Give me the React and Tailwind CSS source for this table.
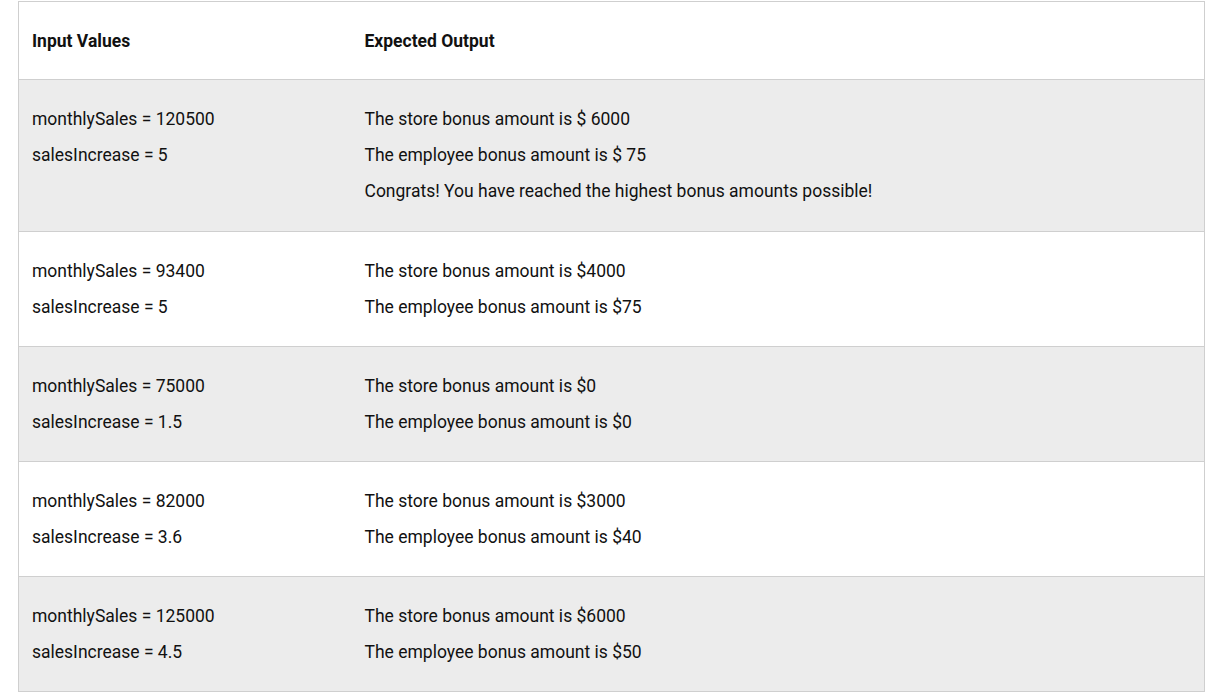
const rows = [
  {
    inputs: ['monthlySales = 120500', 'salesIncrease = 5'],
    outputs: [
      'The store bonus amount is $ 6000',
      'The employee bonus amount is $ 75',
      'Congrats! You have reached the highest bonus amounts possible!',
    ],
  },
  {
    inputs: ['monthlySales = 93400', 'salesIncrease = 5'],
    outputs: ['The store bonus amount is $4000', 'The employee bonus amount is $75'],
  },
  {
    inputs: ['monthlySales = 75000', 'salesIncrease = 1.5'],
    outputs: ['The store bonus amount is $0', 'The employee bonus amount is $0'],
  },
  {
    inputs: ['monthlySales = 82000', 'salesIncrease = 3.6'],
    outputs: ['The store bonus amount is $3000', 'The employee bonus amount is $40'],
  },
  {
    inputs: ['monthlySales = 125000', 'salesIncrease = 4.5'],
    outputs: ['The store bonus amount is $6000', 'The employee bonus amount is $50'],
  },
];

function Lines({ items }) {
  return (
    <div className="flex flex-col gap-3">
      {items.map((t) => (
        <p key={t}>{t}</p>
      ))}
    </div>
  );
}

export default function App() {
  return (
    <div className="bg-white min-h-screen pt-px pl-[18px] pr-px font-['Roboto',sans-serif] text-[17.5px] leading-6 text-[#111]">
      <table className="w-full border-collapse border border-[#cfcfcf]">
        <thead>
          <tr className="bg-white">
            <th className="w-[333px] text-left font-bold px-[13px] pt-[27px] pb-[26px] align-top">Input Values</th>
            <th className="text-left font-bold px-[13px] pt-[27px] pb-[26px] align-top">Expected Output</th>
          </tr>
        </thead>
        <tbody>
          {rows.map((r, i) => (
            <tr key={i} className={`border-t border-[#cfcfcf] ${i % 2 === 0 ? 'bg-[#ececec]' : 'bg-white'}`}>
              <td className={`px-[13px] pt-[27px] align-top ${i === 0 ? 'pb-[28px]' : 'pb-[27px]'}`}>
                <Lines items={r.inputs} />
              </td>
              <td className={`px-[13px] pt-[27px] align-top ${i === 0 ? 'pb-[28px]' : 'pb-[27px]'}`}>
                <Lines items={r.outputs} />
              </td>
            </tr>
          ))}
        </tbody>
      </table>
    </div>
  );
}
